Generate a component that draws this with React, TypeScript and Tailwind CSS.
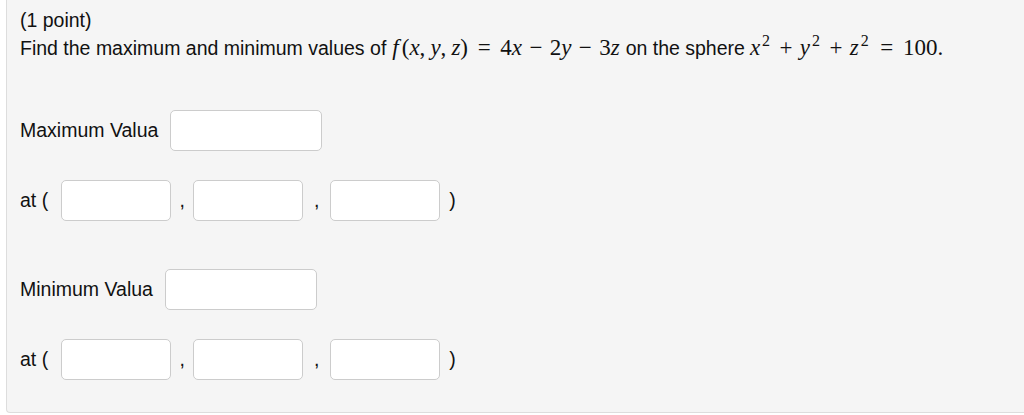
import React from "react";

const sans = "font-['Liberation_Sans',Arial,sans-serif]";
const serif = "font-['Liberation_Serif','Times_New_Roman',serif]";

function Box({ w }: { w: string }) {
  return (
    <input
      type="text"
      className={`${w} h-[41px] rounded-[5px] border border-[#cccccc] bg-white outline-none`}
    />
  );
}

function I({ children }: { children: React.ReactNode }) {
  return <span className="italic">{children}</span>;
}

function Rel({ c }: { c: string }) {
  return <span className="mx-[0.42em]">{c}</span>;
}

function Op({ c }: { c: string }) {
  return <span className="mx-[0.32em]">{c}</span>;
}

function Comma() {
  return <span className="mr-[0.22em]">,</span>;
}

function Sq() {
  return <span className="text-[16px] relative -top-[9px] ml-[2px] mr-[2px] leading-none">2</span>;
}

function PointRow() {
  return (
    <div className="flex items-center h-[41px]">
      <span className="mr-[13px]">at (</span>
      <Box w="w-[110px]" />
      <span className="w-[22px] text-center">,</span>
      <Box w="w-[110px]" />
      <span className="w-[27px] text-center">,</span>
      <Box w="w-[110px]" />
      <span className="ml-[9px]">)</span>
    </div>
  );
}

export default function App() {
  return (
    <div className={`w-[1024px] h-[415px] bg-white ${sans} text-[19.5px] text-[#111]`}>
      <div className="ml-[6px] h-[413px] bg-[#f5f5f5] border-l border-b border-[#dddddd] rounded-bl-[4px] pl-[13px] pt-[8px]">
        <div className="leading-[24px]">(1 point)</div>
        <div className="flex items-baseline mt-[3px] leading-[26px] whitespace-nowrap">
          <span>Find the maximum and minimum values of</span>
          <span className={`${serif} text-[23px] ml-[6px]`}>
            <I>f</I>
            <span className="ml-[3px]">(</span>
            <I>x</I>
            <Comma />
            <I>y</I>
            <Comma />
            <I>z</I>)<Rel c="=" />4<I>x</I>
            <Op c="−" />2<I>y</I>
            <Op c="−" />3<I>z</I>
          </span>
          <span className="ml-[6px]">on the sphere</span>
          <span className={`${serif} text-[23px] ml-[5px]`}>
            <I>x</I>
            <Sq />
            <Op c="+" />
            <I>y</I>
            <Sq />
            <Op c="+" />
            <I>z</I>
            <Sq />
            <Rel c="=" />
            100.
          </span>
        </div>

        <div className="flex items-center h-[41px] mt-[49px]">
          <span className="mr-[12px]">Maximum Valua</span>
          <Box w="w-[152px]" />
        </div>
        <div className="mt-[29px]">
          <PointRow />
        </div>

        <div className="flex items-center h-[41px] mt-[48px]">
          <span className="mr-[12px]">Minimum Valua</span>
          <Box w="w-[152px]" />
        </div>
        <div className="mt-[29px]">
          <PointRow />
        </div>
      </div>
    </div>
  );
}
